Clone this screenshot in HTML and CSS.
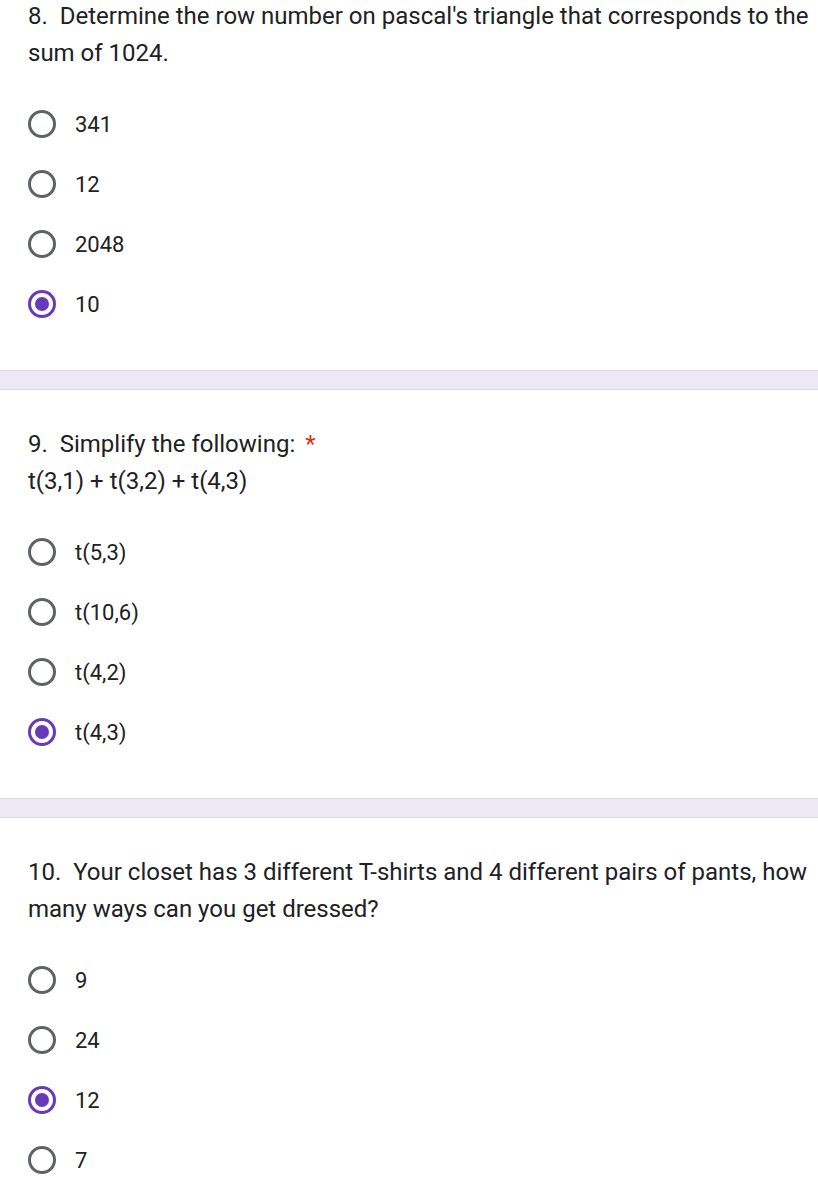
FILE: index.html
```html
<!DOCTYPE html>
<html>
<head>
<meta charset="utf-8">
<link rel="stylesheet" href="styles.css">
</head>
<body>
<div class="page">
  <section class="question first">
    <div class="title">8.&nbsp; Determine the row number on pascal's triangle that corresponds to the sum of 1024.</div>
    <div class="options">
      <div class="option"><span class="radio"></span><span class="label">341</span></div>
      <div class="option"><span class="radio"></span><span class="label">12</span></div>
      <div class="option"><span class="radio"></span><span class="label">2048</span></div>
      <div class="option"><span class="radio checked"></span><span class="label">10</span></div>
    </div>
  </section>
  <div class="band"></div>
  <section class="question">
    <div class="title">9.&nbsp; Simplify the following: <span class="req">*</span><br>t(3,1) + t(3,2) + t(4,3)</div>
    <div class="options">
      <div class="option"><span class="radio"></span><span class="label">t(5,3)</span></div>
      <div class="option"><span class="radio"></span><span class="label">t(10,6)</span></div>
      <div class="option"><span class="radio"></span><span class="label">t(4,2)</span></div>
      <div class="option"><span class="radio checked"></span><span class="label">t(4,3)</span></div>
    </div>
  </section>
  <div class="band"></div>
  <section class="question">
    <div class="title">10.&nbsp; Your closet has 3 different T-shirts and 4 different pairs of pants, how many ways can you get dressed?</div>
    <div class="options">
      <div class="option"><span class="radio"></span><span class="label">9</span></div>
      <div class="option"><span class="radio"></span><span class="label">24</span></div>
      <div class="option"><span class="radio checked"></span><span class="label">12</span></div>
      <div class="option"><span class="radio"></span><span class="label">7</span></div>
    </div>
  </section>
</div>
</body>
</html>
```
FILE: styles.css
```css
html, body {
  margin: 0;
  padding: 0;
  background: #ffffff;
}
body {
  font-family: Roboto, "Liberation Sans", Arial, sans-serif;
  color: #202124;
}
.page {
  width: 818px;
  overflow: hidden;
}
.question {
  padding: 36px 0 36px 28px;
}
.question.first {
  padding-top: 0;
  margin-top: -2px;
}
.title {
  font-size: 24px;
  line-height: 37px;
  letter-spacing: 0;
}
.req {
  color: #d93025;
  margin-left: 4px;
}
.options {
  margin-top: 22px;
  display: flex;
  flex-direction: column;
}
.option {
  height: 60px;
  display: flex;
  align-items: center;
}
.radio {
  box-sizing: border-box;
  width: 28px;
  height: 28px;
  border: 3px solid #5f6368;
  border-radius: 50%;
  flex: none;
  display: flex;
  align-items: center;
  justify-content: center;
}
.radio.checked {
  border-color: #673ab7;
}
.radio.checked::after {
  content: "";
  width: 14px;
  height: 14px;
  border-radius: 50%;
  background: #673ab7;
}
.label {
  margin-left: 19px;
  font-size: 22px;
}
.band {
  height: 18px;
  background: #ede9f5;
  border-top: 1px solid #dadce0;
  border-bottom: 1px solid #dadce0;
}
```
